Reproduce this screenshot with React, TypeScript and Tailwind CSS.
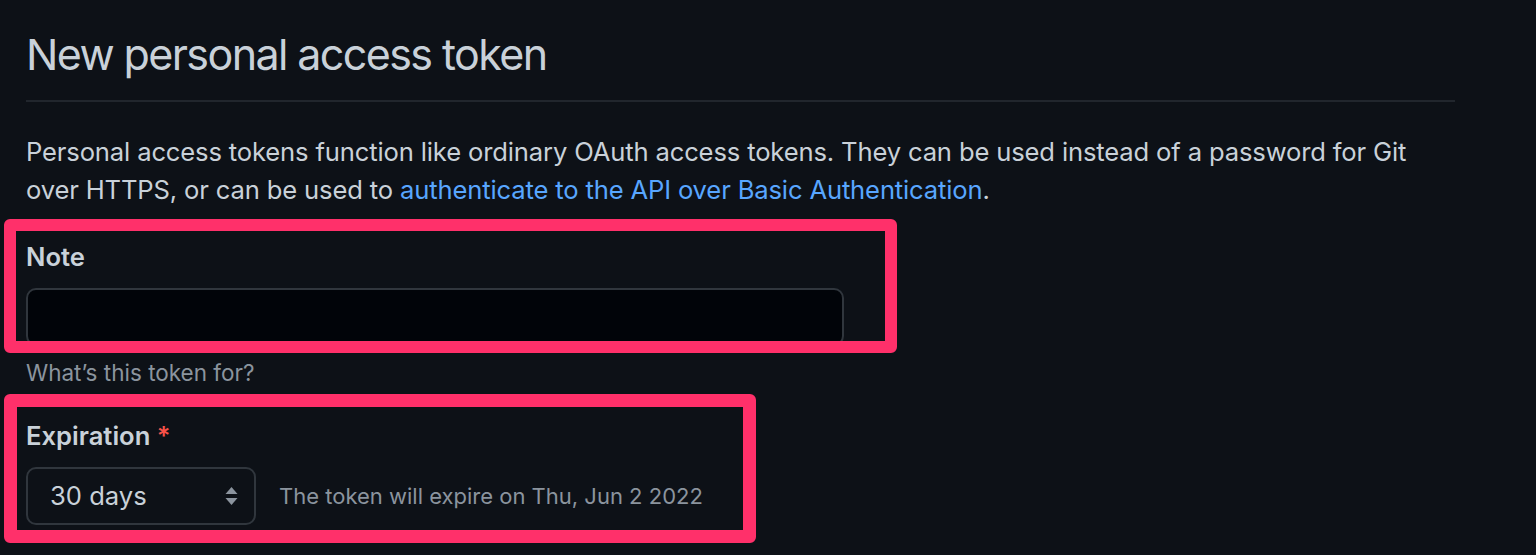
function SelectArrows() {
  return (
    <svg width="13" height="20" viewBox="0 0 13 20" className="shrink-0">
      <path d="M6.5 1 L12.5 8 L0.5 8 Z" fill="#8b949e" />
      <path d="M6.5 19 L12.5 12 L0.5 12 Z" fill="#8b949e" />
    </svg>
  )
}

export default function App() {
  return (
    <div
      className="relative min-h-screen bg-[#0d1117] text-[#c9d1d9]"
      style={{ fontFamily: "Inter, 'Noto Sans', 'Liberation Sans', sans-serif" }}
    >
      <div className="pl-[26px] pr-[81px] pt-[27px]">
        <h2 className="border-b-2 border-[#21262d] pb-[18px] text-[43px] font-normal leading-[55px] tracking-[-1.6px]">
          New personal access token
        </h2>

        <p className="mt-[31px] text-[25.6px] leading-[38px] tracking-[-0.15px]">
          Personal access tokens function like ordinary OAuth access tokens. They can be used instead of a password for Git
          over HTTPS, or can be used to{" "}
          <a href="#" className="text-[#58a6ff]">
            authenticate to the API over Basic Authentication
          </a>
          .
        </p>

        <div className="mt-[29px]">
          <label className="block text-[25.6px] font-semibold leading-[38px]">Note</label>
          <input
            type="text"
            className="mt-[12px] block h-[58px] w-[818px] rounded-[10px] border-2 border-[#30363d] bg-[#010409] px-4 text-[25.6px] outline-none"
          />
          <p className="mt-[10px] text-[22.5px] leading-[33px] text-[#8b949e]">What’s this token for?</p>
        </div>

        <div className="mt-[28px]">
          <label className="block text-[25.6px] font-semibold leading-[38px]">
            Expiration <span className="text-[#f85149]">*</span>
          </label>
          <div className="mt-[12px] flex items-center gap-[23px]">
            <div className="flex h-[58px] w-[230px] items-center justify-between rounded-[10px] border-2 border-[#30363d] bg-[#0d1117] pl-[22px] pr-[16px] text-[25.6px]">
              <span>30 days</span>
              <SelectArrows />
            </div>
            <span className="text-[22px] text-[#8b949e]">The token will expire on Thu, Jun 2 2022</span>
          </div>
        </div>
      </div>

      {/* highlight boxes drawn over the form */}
      <div className="absolute left-[4px] top-[219px] h-[134px] w-[893px] rounded-[6px] border-[12px] border-[#ff306a]" />
      <div className="absolute left-[4px] top-[394px] h-[149px] w-[752px] rounded-[6px] border-[13px] border-[#ff306a]" />
    </div>
  )
}
